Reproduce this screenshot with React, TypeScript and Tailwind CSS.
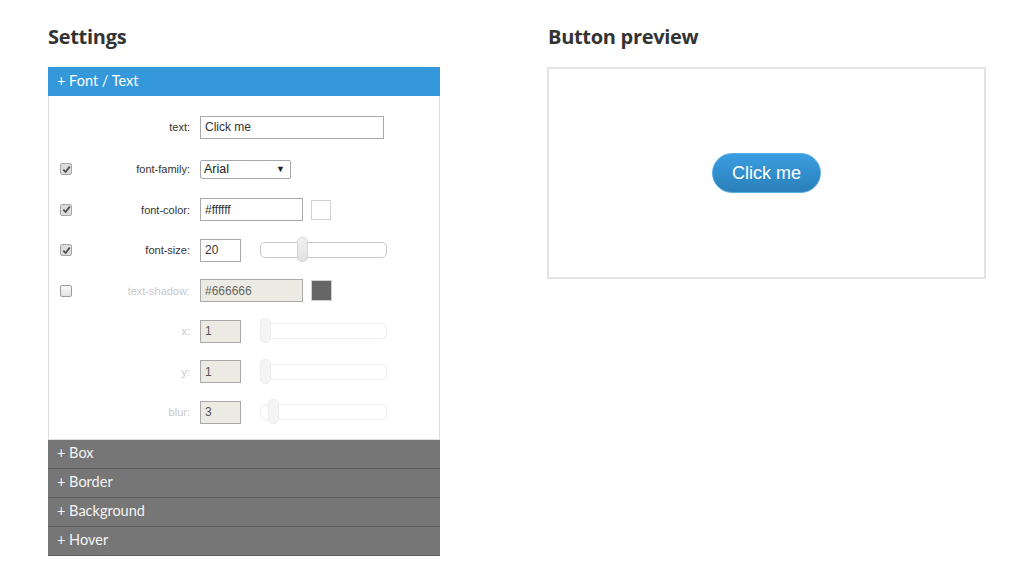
import React from "react";

const Check = ({ checked }: { checked: boolean }) => (
  <div
    className={`w-[12px] h-[12px] rounded-[2px] border flex items-center justify-center ${
      checked ? "border-[#a6a6a6] bg-[#dcdcdc]" : "border-[#9a9a9a] bg-gradient-to-b from-[#fafafa] to-[#e2e2e2]"
    }`}
  >
    {checked && (
      <svg width="9" height="9" viewBox="0 0 10 10">
        <path d="M1.5 5.2 L4 7.8 L8.6 1.8" fill="none" stroke="#4a4a4a" strokeWidth="1.9" />
      </svg>
    )}
  </div>
);

const Slider = ({ pos, disabled }: { pos: number; disabled?: boolean }) => (
  <div
    className={`relative ml-[19px] w-[127px] h-[16px] rounded-[5px] border bg-white ${
      disabled ? "border-[#eeeeee]" : "border-[#c8c8c8]"
    }`}
  >
    <div
      className={`absolute top-[-6px] w-[11px] h-[25px] rounded-[5px] border ${
        disabled ? "border-[#ececec] bg-[#f4f4f4]" : "border-[#d4d4d4] bg-gradient-to-b from-[#f0f0f0] to-[#e2e2e2]"
      }`}
      style={{ left: pos }}
    />
  </div>
);

type RowProps = {
  check?: boolean | null;
  label: string;
  disabled?: boolean;
  children: React.ReactNode;
  h: string;
};

const Row = ({ check, label, disabled, children, h }: RowProps) => (
  <div className={`flex items-center ${h}`}>
    <div className="w-[141px] flex items-center">
      <div className="w-[24px] pl-[11px] flex items-center">
        {check !== null && check !== undefined && <Check checked={check} />}
      </div>
      <div
        className={`flex-1 text-right text-[11px] ${disabled ? "text-[#c8c8c8]" : "text-[#333333]"}`}
      >
        {label}
      </div>
    </div>
    <div className="ml-[10px] flex items-center">{children}</div>
  </div>
);

const inputBase =
  "h-[23px] border border-[#a9a9a9] px-[4px] text-[12px] flex items-center font-['Liberation_Sans',Arial,sans-serif]";

export default function App() {
  return (
    <div className="w-[1024px] h-[587px] bg-white font-['Liberation_Sans',Arial,sans-serif] text-[#333333] flex pl-[48px] pt-[22px]">
      {/* Settings column */}
      <div className="w-[392px] flex flex-col">
        <h2 className="font-['Open_Sans',sans-serif] font-bold text-[20px] leading-[30px] text-[#333333] h-[45px] tracking-[-0.3px]">
          Settings
        </h2>
        <div className="h-[29px] bg-[#3498db] text-white font-['Lato',sans-serif] text-[14.5px] flex items-center pl-[9px] pb-[1px]">
          + Font / Text
        </div>
        <div className="border border-t-0 border-[#dddddd] pt-[9px] pb-[6px] flex flex-col">
          <Row label="text:" h="h-[44px]">
            <div className={`${inputBase} w-[184px] text-[#333]`}>Click me</div>
          </Row>
          <Row check={true} label="font-family:" h="h-[40.5px]">
            <div className="h-[19px] w-[91px] border border-[#a9a9a9] rounded-[2px] text-[12.5px] flex items-center justify-between pl-[3px] pr-[5px] text-[#222]">
              <span>Arial</span>
              <span className="text-[9px]">▼</span>
            </div>
          </Row>
          <Row check={true} label="font-color:" h="h-[40.5px]">
            <div className={`${inputBase} w-[103px] text-[#333]`}>#ffffff</div>
            <div className="ml-[8px] w-[20px] h-[20px] border border-[#d0d0d0] bg-white" />
          </Row>
          <Row check={true} label="font-size:" h="h-[40.5px]">
            <div className={`${inputBase} w-[41px] text-[#333]`}>20</div>
            <Slider pos={36} />
          </Row>
          <Row check={false} label="text-shadow:" disabled h="h-[40.5px]">
            <div className={`${inputBase} w-[103px] bg-[#ebebe4] text-[#666]`}>#666666</div>
            <div className="ml-[8px] w-[21px] h-[21px] border border-[#cfcfcf] bg-[#666666]" />
          </Row>
          <Row label="x:" disabled h="h-[40.5px]">
            <div className={`${inputBase} w-[41px] bg-[#ebebe4] text-[#555]`}>1</div>
            <Slider pos={-1} disabled />
          </Row>
          <Row label="y:" disabled h="h-[40.5px]">
            <div className={`${inputBase} w-[41px] bg-[#ebebe4] text-[#555]`}>1</div>
            <Slider pos={-1} disabled />
          </Row>
          <Row label="blur:" disabled h="h-[40.5px]">
            <div className={`${inputBase} w-[41px] bg-[#ebebe4] text-[#555]`}>3</div>
            <Slider pos={7} disabled />
          </Row>
        </div>
        {["+ Box", "+ Border", "+ Background", "+ Hover"].map((t) => (
          <div
            key={t}
            className="h-[29px] bg-[#767676] border-b border-[#5e5e5e] text-[#f4f4f4] font-['Lato',sans-serif] text-[14.5px] flex items-center pl-[9px] pb-[2px]"
          >
            {t}
          </div>
        ))}
      </div>

      {/* Preview column */}
      <div className="ml-[107px] w-[439px] flex flex-col">
        <h2 className="font-['Open_Sans',sans-serif] font-bold text-[20px] leading-[30px] text-[#333333] h-[45px] tracking-[-0.3px] pl-[1px]">
          Button preview
        </h2>
        <div className="h-[212px] border-2 border-[#e4e4e4] flex items-center justify-center">
          <div className="h-[40px] px-[19px] rounded-full bg-gradient-to-b from-[#3a9de0] to-[#2a80b9] border border-[#5aaee6] text-white text-[18px] flex items-center font-['Liberation_Sans',Arial,sans-serif]">
            Click me
          </div>
        </div>
      </div>
    </div>
  );
}
